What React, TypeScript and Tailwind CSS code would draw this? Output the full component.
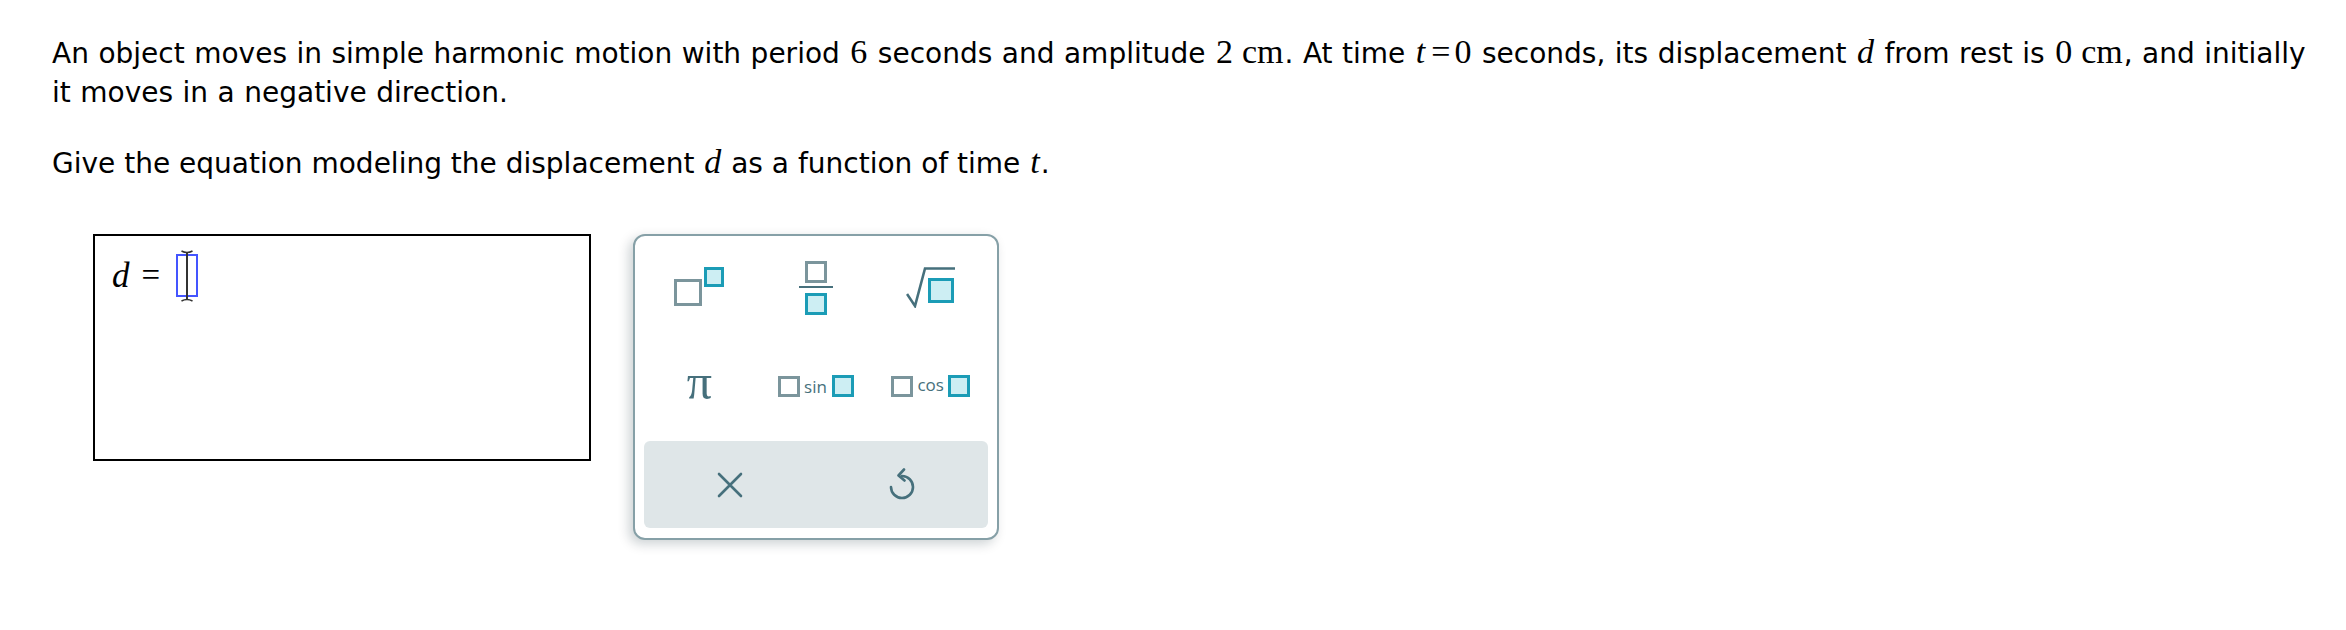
import React from "react";

const M = ({ children }: { children: React.ReactNode }) => (
  <span className="px-[1px] font-['Liberation_Serif',serif] text-[34px] leading-none">{children}</span>
);
const V = ({ children }: { children: React.ReactNode }) => (
  <span className="px-[1px] font-['Liberation_Serif',serif] italic text-[34px] leading-none">{children}</span>
);

const GraySq = ({ cls = "" }: { cls?: string }) => (
  <div className={"border-[3px] border-[#7b959c] bg-white " + cls} />
);
const TealSq = ({ cls = "" }: { cls?: string }) => (
  <div className={"border-[3px] border-[#1b9cb6] bg-[#cdeef3] " + cls} />
);

export default function App() {
  return (
    <div className="w-[2346px] h-[630px] bg-white pt-[34px] pl-[52px] font-['DejaVu_Sans',sans-serif] text-[28px] leading-[39px] text-black">
      <p className="w-[2265px] [word-spacing:0.6px]">
        An object moves in simple harmonic motion with period <M>6</M> seconds and amplitude{" "}
        <M>
          2<span className="ml-[9px]">cm</span>
        </M>
        . At time <V>t</V>
        <M>
          <span className="mx-[4px]">=</span>0
        </M>{" "}
        seconds, its displacement <V>d</V> from rest is{" "}
        <M>
          0<span className="ml-[9px]">cm</span>
        </M>
        , and initially it moves in a negative direction.
      </p>
      <p className="mt-[32px]">
        Give the equation modeling the displacement <V>d</V> as a function of time <V>t</V>.
      </p>

      <div className="mt-[51px] ml-[41px] flex items-start gap-[42px]">
        {/* answer box */}
        <div className="w-[498px] h-[227px] border-2 border-black">
          <div className="mt-[18px] ml-[17px] flex items-center">
            <span className="font-['Liberation_Serif',serif] italic text-[35px] leading-none">d</span>
            <span className="ml-[12px] font-['Liberation_Serif',serif] text-[33px] leading-none">=</span>
            <span className="relative ml-[16px] w-[22px] h-[43px] border-2 border-[#4455ff]">
              <svg
                className="absolute left-[2px] -top-[6px]"
                width="14"
                height="52"
                viewBox="0 0 14 52"
                fill="none"
                stroke="#333"
              >
                <path d="M1.5 1 Q7 4 12.5 1" strokeWidth="1.5" />
                <path d="M1.5 51 Q7 48 12.5 51" strokeWidth="1.5" />
                <path d="M7 3 V49" strokeWidth="2" />
              </svg>
            </span>
          </div>
        </div>

        {/* keypad panel */}
        <div className="w-[366px] h-[306px] rounded-[12px] border-2 border-[#86a0a7] bg-white shadow-[-4px_4px_12px_rgba(0,30,40,0.2)] pt-[10px] pb-[10px] px-[9px] flex flex-col">
          <div className="grid grid-cols-3 grid-rows-[84px_84px] gap-y-[14px]">
            {/* exponent */}
            <div className="flex items-center justify-center">
              <div className="flex items-start gap-[2px] mr-[4px] mt-[-3px]">
                <GraySq cls="w-[28px] h-[27px] mt-[12px]" />
                <TealSq cls="w-[20px] h-[20px]" />
              </div>
            </div>
            {/* fraction */}
            <div className="flex items-center justify-center">
              <div className="flex flex-col items-center">
                <GraySq cls="w-[22px] h-[22px]" />
                <div className="mt-[3px] w-[34px] h-[2.5px] bg-[#46707c]" />
                <TealSq cls="mt-[5px] w-[22px] h-[22px]" />
              </div>
            </div>
            {/* sqrt */}
            <div className="flex items-center justify-center">
              <svg width="50" height="42" viewBox="0 0 50 42" fill="none" className="mt-[-3px]">
                <path
                  d="M1 28 L9 40 L19 2.5 L49 2.5"
                  stroke="#46707c"
                  strokeWidth="2.6"
                  strokeLinejoin="miter"
                />
                <rect x="23.5" y="13.5" width="23" height="22" fill="#cdeef3" stroke="#1b9cb6" strokeWidth="3" />
              </svg>
            </div>
            {/* pi */}
            <div className="flex items-center justify-center">
              <span className="mr-[4px] mt-[-8px] font-['Liberation_Serif',serif] text-[50px] leading-none text-[#46707c]">
                π
              </span>
            </div>
            {/* sin */}
            <div className="flex items-center justify-center">
              <div className="flex items-center">
                <GraySq cls="w-[22px] h-[21px]" />
                <span className="ml-[4px] mr-[5px] font-['Open_Sans',sans-serif] text-[17px] leading-none text-[#46707c]">
                  sin
                </span>
                <TealSq cls="w-[22px] h-[22px]" />
              </div>
            </div>
            {/* cos */}
            <div className="flex items-center justify-center">
              <div className="flex items-center">
                <GraySq cls="w-[22px] h-[21px]" />
                <span className="ml-[4px] mr-[4px] mt-[-3px] font-['Open_Sans',sans-serif] text-[17px] leading-none text-[#46707c]">
                  cos
                </span>
                <TealSq cls="w-[22px] h-[22px]" />
              </div>
            </div>
          </div>

          <div className="mt-auto h-[87px] rounded-[6px] bg-[#dfe6e8] grid grid-cols-2 items-center justify-items-center">
            <svg width="26" height="26" viewBox="0 0 26 26" fill="none" stroke="#46707c" strokeWidth="2.6" strokeLinecap="round">
              <path d="M2 2 L24 24 M24 2 L2 24" />
            </svg>
            <svg width="28" height="34" viewBox="0 0 28 34" fill="none" stroke="#46707c" strokeWidth="2.6" strokeLinecap="round" strokeLinejoin="round">
              <path d="M14 8 A11 11 0 1 1 3 19" />
              <path d="M16 1.5 L10.5 7.5 L16.5 12.5" />
            </svg>
          </div>
        </div>
      </div>
    </div>
  );
}
